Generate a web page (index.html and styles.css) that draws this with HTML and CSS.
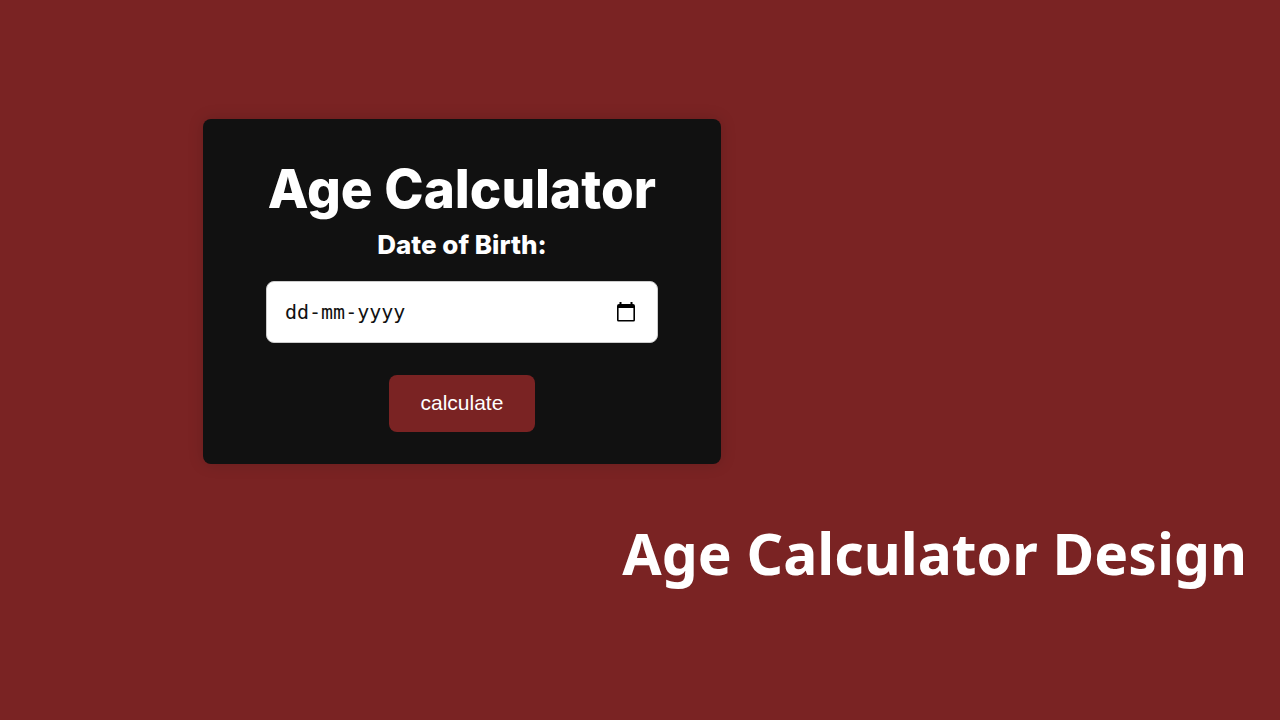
FILE: index.html
```html
<!DOCTYPE html>
<html lang="en">
<head>
    <meta charset="UTF-8">
    <meta name="viewport" content="width=device-width, initial-scale=1.0">
    <title>Age Calculator</title>
    <link rel="stylesheet" href="styles.css">
</head>
<body>

    <!-- Calculator card -->
    <form class="container" id="ageForm">
        <h1>Age Calculator</h1>
        <label for="birthdate">Date of Birth:</label>
        <div class="date-field">
            <input type="text" id="birthdate" placeholder="dd-mm-yyyy">
            <button type="button" class="picker" aria-label="Open calendar">
                <svg viewBox="0 0 18 20" width="18" height="20">
                    <path fill="#000" fill-rule="evenodd" d="M2.5 0h2v2h9V0h2v2H16a2 2 0 0 1 2 2v14a1.5 1.5 0 0 1-1.5 1.5h-15A1.5 1.5 0 0 1 0 18V4a2 2 0 0 1 2-2h.5zM1.6 6v12h14.8V6z"/>
                </svg>
            </button>
        </div>
        <button type="submit" class="calculate">calculate</button>
    </form>

    <h2 class="caption">Age Calculator Design</h2>

</body>
</html>
```

FILE: styles.css
```css
* {
    box-sizing: border-box;
    margin: 0;
    padding: 0;
}

body {
    min-height: 100vh;
    padding: 119px 33px 40px;
    background-color: #7a2323;
    color: #fff;
    font-family: Inter, "Open Sans", sans-serif;
}

/* Calculator card */
.container {
    display: flex;
    flex-direction: column;
    align-items: center;
    width: 100%;
    max-width: 518px;
    margin-left: 14%;
    padding: 40px 63px 32px;
    border-radius: 8px;
    background-color: #111;
    box-shadow: 0 0 16px rgba(0, 0, 0, 0.15);
}

h1 {
    font-size: 53px;
    font-weight: 800;
    line-height: 60px;
    white-space: nowrap;
}

label {
    margin: 10px 0 20px;
    font-size: 26px;
    font-weight: 800;
    line-height: 32px;
}

.date-field {
    display: flex;
    align-items: center;
    width: 100%;
    height: 62px;
    margin-bottom: 32px;
    padding: 0 22px 0 18px;
    border: 1px solid #ccc;
    border-radius: 8px;
    background-color: #fff;
}

.date-field input {
    flex: 1;
    min-width: 0;
    border: none;
    outline: none;
    background: none;
    color: #000;
    font-family: "DejaVu Sans Mono", monospace;
    font-size: 20px;
}

.date-field input::placeholder {
    color: #111;
}

.picker {
    display: flex;
    border: none;
    background: none;
    cursor: pointer;
}

/* Submit button */
.calculate {
    padding: 15px 32px 17px;
    border: none;
    border-radius: 8px;
    background-color: #7a2323;
    color: #fff;
    font-family: "Liberation Sans", Arial, sans-serif;
    font-size: 21px;
    line-height: 25px;
    cursor: pointer;
}

/* Title in the lower right */
.caption {
    margin-top: 49px;
    font-family: "Noto Sans", sans-serif;
    font-size: 57px;
    font-weight: 700;
    line-height: 80px;
    text-align: right;
}
```
